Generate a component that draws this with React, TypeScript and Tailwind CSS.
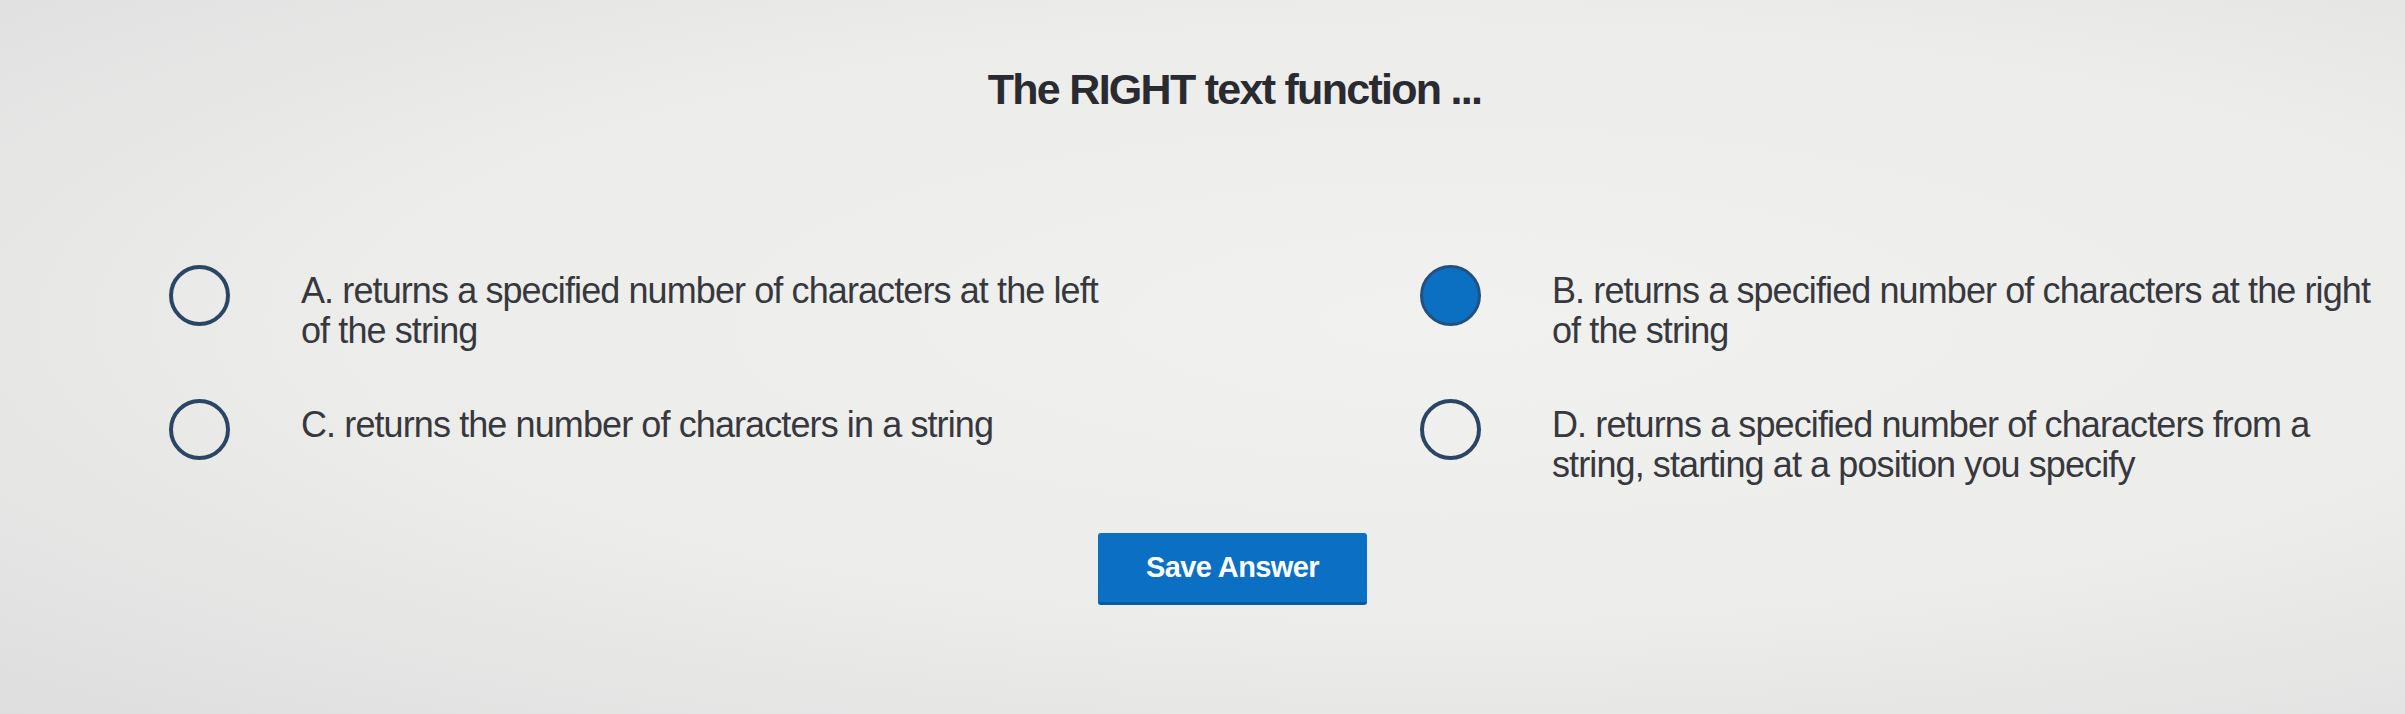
import { useState } from 'react';

type Option = { id: string; lines: string[] };

const OPTIONS: Option[] = [
  { id: 'A', lines: ['A. returns a specified number of characters at the left', 'of the string'] },
  { id: 'B', lines: ['B. returns a specified number of characters at the right', 'of the string'] },
  { id: 'C', lines: ['C. returns the number of characters in a string'] },
  { id: 'D', lines: ['D. returns a specified number of characters from a', 'string, starting at a position you specify'] },
];

function Radio({ checked }: { checked: boolean }) {
  return checked ? (
    <span className="block w-[61px] h-[61px] shrink-0 rounded-full bg-[#0b6fc2] border-[3px] border-[#24507e]" />
  ) : (
    <span className="block w-[61px] h-[61px] shrink-0 rounded-full border-[4px] border-[#2a4664]" />
  );
}

export default function App() {
  const [selected, setSelected] = useState('B');

  return (
    <div
      className="w-[2405px] h-[714px] overflow-hidden bg-[radial-gradient(ellipse_at_60%_45%,#f1f1f0_0%,#ececeb_55%,#dedede_100%)] text-[#37383d]"
      style={{ fontFamily: "'Liberation Sans', Arial, sans-serif" }}
    >
      {/* question */}
      <div className="flex justify-center pt-[65px] pl-[64px]">
        <h1 className="text-[43px] leading-[48px] font-bold tracking-[-0.04em] text-[#2a2a31]">
          The RIGHT text function ...
        </h1>
      </div>

      {/* answers */}
      <div className="grid grid-cols-2 gap-x-[266px] gap-y-[48px] pl-[169px] mt-[152px]">
        {OPTIONS.map((o) => (
          <label
            key={o.id}
            onClick={() => setSelected(o.id)}
            className="flex items-start gap-[71px] cursor-pointer"
          >
            <Radio checked={selected === o.id} />
            <span className="pt-[6px] text-[36px] leading-[40px] tracking-[-0.025em] whitespace-nowrap">
              {o.lines.map((l, i) => (
                <span key={i} className="block">
                  {l}
                </span>
              ))}
            </span>
          </label>
        ))}
      </div>

      {/* submit */}
      <div className="flex justify-center mt-[48px] pl-[60px]">
        <button className="w-[269px] h-[72px] rounded-[3px] bg-[#0b70c3] border-b-[3px] border-[#0a5a9e] text-white text-[29px] font-bold tracking-[-0.02em]">
          Save Answer
        </button>
      </div>
    </div>
  );
}
